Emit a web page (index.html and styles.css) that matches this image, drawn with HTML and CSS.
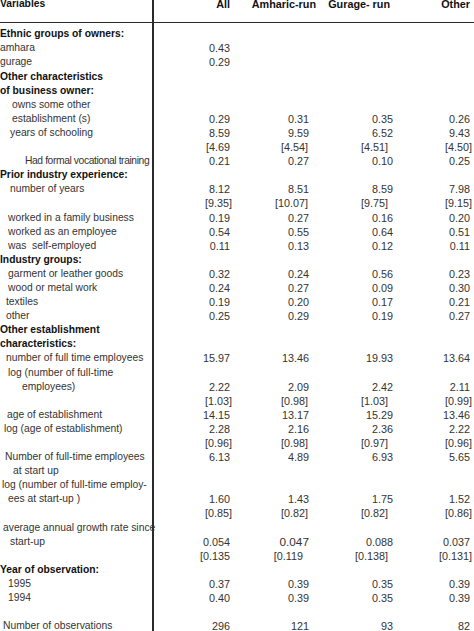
FILE: index.html
```html
<!DOCTYPE html>
<html>
<head>
<meta charset="utf-8">
<link rel="stylesheet" href="styles.css">
</head>
<body>
<div class="table">
  <div class="head">
    <div class="h lab">Variables</div>
    <div class="h num">All</div>
    <div class="h num amh">Amharic-run</div>
    <div class="h num gur">Gurage- run</div>
    <div class="h num">Other</div>
  </div>
  <div class="body">
    <div class="row"><div class="lab b">Ethnic groups of owners:</div></div>
    <div class="row"><div class="lab">amhara</div><div class="num">0.43</div></div>
    <div class="row"><div class="lab">gurage</div><div class="num">0.29</div></div>
    <div class="row"><div class="lab b">Other characteristics</div></div>
    <div class="row"><div class="lab b">of business owner:</div></div>
    <div class="row"><div class="lab i12">owns some other</div></div>
    <div class="row"><div class="lab i12">establishment (s)</div><div class="num">0.29</div><div class="num">0.31</div><div class="num">0.35</div><div class="num">0.26</div></div>
    <div class="row"><div class="lab i10">years of schooling</div><div class="num">8.59</div><div class="num">9.59</div><div class="num">6.52</div><div class="num">9.43</div></div>
    <div class="row"><div class="lab"></div><div class="num sd o">[4.69</div><div class="num sd">[4.54]</div><div class="num sd">[4.51]</div><div class="num sd">[4.50]</div></div>
    <div class="row"><div class="lab i25 tight">Had formal vocational training</div><div class="num">0.21</div><div class="num">0.27</div><div class="num">0.10</div><div class="num">0.25</div></div>
    <div class="row"><div class="lab b">Prior industry experience:</div></div>
    <div class="row"><div class="lab i10">number of years</div><div class="num">8.12</div><div class="num">8.51</div><div class="num">8.59</div><div class="num">7.98</div></div>
    <div class="row"><div class="lab"></div><div class="num sd">[9.35]</div><div class="num sd">[10.07]</div><div class="num sd">[9.75]</div><div class="num sd">[9.15]</div></div>
    <div class="row"><div class="lab i8">worked in a family business</div><div class="num">0.19</div><div class="num">0.27</div><div class="num">0.16</div><div class="num">0.20</div></div>
    <div class="row"><div class="lab i8">worked as an employee</div><div class="num">0.54</div><div class="num">0.55</div><div class="num">0.64</div><div class="num">0.51</div></div>
    <div class="row"><div class="lab i8">was&nbsp; self-employed</div><div class="num">0.11</div><div class="num">0.13</div><div class="num">0.12</div><div class="num">0.11</div></div>
    <div class="row"><div class="lab b">Industry groups:</div></div>
    <div class="row"><div class="lab i8">garment or leather goods</div><div class="num">0.32</div><div class="num">0.24</div><div class="num">0.56</div><div class="num">0.23</div></div>
    <div class="row"><div class="lab i8">wood or metal work</div><div class="num">0.24</div><div class="num">0.27</div><div class="num">0.09</div><div class="num">0.30</div></div>
    <div class="row"><div class="lab i6">textiles</div><div class="num">0.19</div><div class="num">0.20</div><div class="num">0.17</div><div class="num">0.21</div></div>
    <div class="row"><div class="lab i6">other</div><div class="num">0.25</div><div class="num">0.29</div><div class="num">0.19</div><div class="num">0.27</div></div>
    <div class="row"><div class="lab b">Other establishment</div></div>
    <div class="row"><div class="lab b">characteristics:</div></div>
    <div class="row"><div class="lab i6">number of full time employees</div><div class="num">15.97</div><div class="num">13.46</div><div class="num">19.93</div><div class="num">13.64</div></div>
    <div class="row"><div class="lab i8">log (number of full-time</div></div>
    <div class="row"><div class="lab i22">employees)</div><div class="num">2.22</div><div class="num">2.09</div><div class="num">2.42</div><div class="num">2.11</div></div>
    <div class="row"><div class="lab"></div><div class="num sd">[1.03]</div><div class="num sd">[0.98]</div><div class="num sd">[1.03]</div><div class="num sd">[0.99]</div></div>
    <div class="row"><div class="lab i7">age of establishment</div><div class="num">14.15</div><div class="num">13.17</div><div class="num">15.29</div><div class="num">13.46</div></div>
    <div class="row"><div class="lab i4">log (age of establishment)</div><div class="num">2.28</div><div class="num">2.16</div><div class="num">2.36</div><div class="num">2.22</div></div>
    <div class="row"><div class="lab"></div><div class="num sd">[0.96]</div><div class="num sd">[0.98]</div><div class="num sd">[0.97]</div><div class="num sd">[0.96]</div></div>
    <div class="row"><div class="lab i5">Number of full-time employees</div><div class="num">6.13</div><div class="num">4.89</div><div class="num">6.93</div><div class="num">5.65</div></div>
    <div class="row"><div class="lab i13">at start up</div></div>
    <div class="row"><div class="lab i2">log (number of full-time employ-</div></div>
    <div class="row"><div class="lab i8">ees at start-up )</div><div class="num">1.60</div><div class="num">1.43</div><div class="num">1.75</div><div class="num">1.52</div></div>
    <div class="row"><div class="lab"></div><div class="num sd">[0.85]</div><div class="num sd">[0.82]</div><div class="num sd">[0.82]</div><div class="num sd">[0.86]</div></div>
    <div class="row"><div class="lab i3">average annual growth rate since</div></div>
    <div class="row"><div class="lab i10">start-up</div><div class="num">0.054</div><div class="num big">0.047</div><div class="num">0.088</div><div class="num">0.037</div></div>
    <div class="row"><div class="lab"></div><div class="num sd o">[0.135</div><div class="num sd o">[0.119</div><div class="num sd">[0.138]</div><div class="num sd">[0.131]</div></div>
    <div class="row"><div class="lab b">Year of observation:</div></div>
    <div class="row"><div class="lab i8">1995</div><div class="num">0.37</div><div class="num">0.39</div><div class="num">0.35</div><div class="num">0.39</div></div>
    <div class="row"><div class="lab i8">1994</div><div class="num">0.40</div><div class="num">0.39</div><div class="num">0.35</div><div class="num">0.39</div></div>
    <div class="row"><div class="lab"></div></div>
    <div class="row"><div class="lab i3">Number of observations</div><div class="num">296</div><div class="num">121</div><div class="num">93</div><div class="num">82</div></div>
  </div>
</div>
</body>
</html>
```
FILE: styles.css
```css
html, body {
  margin: 0;
  padding: 0;
  background: #ffffff;
}
body {
  font-family: "Liberation Sans", Arial, sans-serif;
  font-size: 10.3px;
  color: #333333;
  overflow: hidden;
  height: 631px;
}
.table {
  width: 474px;
  height: 631px;
  background: linear-gradient(to right, transparent 152.3px, #2a2a2a 152.3px, #2a2a2a 153.8px, transparent 153.8px);
}
.head {
  display: grid;
  grid-template-columns: 153px 77px 79px 84px 77px;
  height: 22.3px;
  border-bottom: 1.6px solid #2a2a2a;
  overflow: hidden;
}
.h {
  font-weight: bold;
  color: #111;
  line-height: 12px;
  margin-top: -2.5px;
  white-space: nowrap;
}
.h.amh { margin-right: -7px; }
.h.gur { margin-right: 3px; }
.body {
  padding-top: 4px;
}
.row {
  display: grid;
  grid-template-columns: 153px 77px 79px 84px 77px;
  height: 14.1px;
  line-height: 14.1px;
}
.lab {
  white-space: nowrap;
}
.num {
  text-align: right;
  white-space: nowrap;
  font-size: 10.8px;
}
.b {
  font-weight: bold;
  color: #111;
}
.tight {
  letter-spacing: -0.4px;
}
.i2 { padding-left: 2px; }
.i3 { padding-left: 3px; }
.i4 { padding-left: 4px; }
.i5 { padding-left: 5px; }
.i6 { padding-left: 6px; }
.i7 { padding-left: 7px; }
.i8 { padding-left: 8px; }
.i10 { padding-left: 10px; }
.i12 { padding-left: 12px; }
.i13 { padding-left: 13px; }
.i22 { padding-left: 22px; }
.i25 { padding-left: 25px; }
.row .sd:nth-child(2) { margin-right: -2px; }
.row .sd:nth-child(3) { margin-right: 1px; }
.row .sd:nth-child(4) { margin-right: 5px; }
.row .sd:nth-child(5) { margin-right: -2px; }
.row .sd.o:nth-child(2) { margin-right: 0; }
.row .sd.o:nth-child(3) { margin-right: 6px; }
.num.big {
  font-size: 11.8px;
}
```
